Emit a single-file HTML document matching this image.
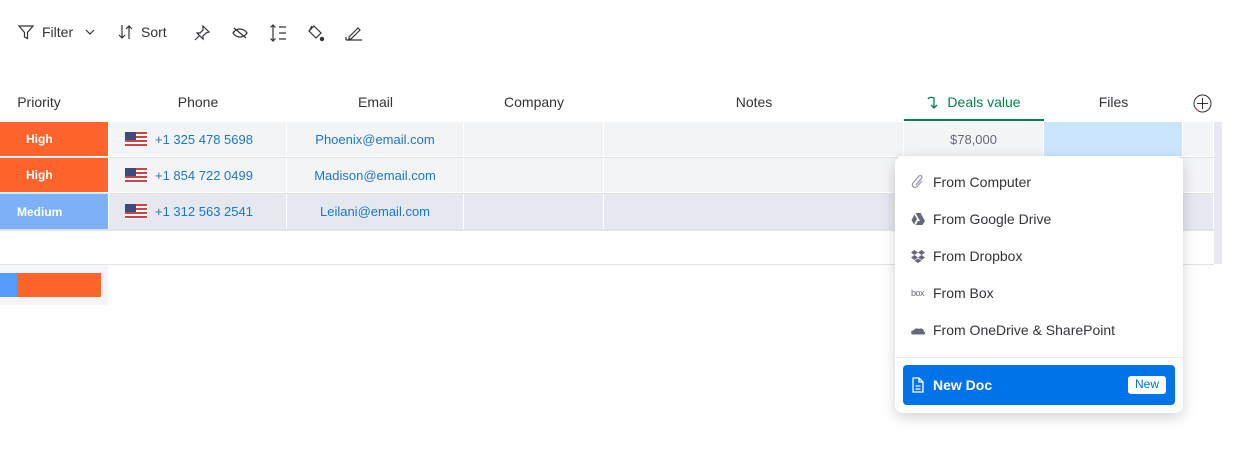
<!DOCTYPE html>
<html><head><meta charset="utf-8"><style>
*{box-sizing:border-box;margin:0;padding:0}
body{width:1237px;height:476px;background:#fff;font-family:"Liberation Sans",sans-serif;position:relative;overflow:hidden;color:#323338}
.a{position:absolute}
.tb{top:22px;font-size:14px;color:#323338;display:flex;align-items:center;height:20px}
.h{top:94px;font-size:14px;color:#323338;text-align:center;height:20px}
.c{position:absolute;height:34px;display:flex;align-items:center;justify-content:center;font-size:13px}
.ph{color:#1f76c2;justify-content:flex-start;padding-left:16px}
.flag{width:22px;height:15px;margin-right:8px;background:repeating-linear-gradient(#c44 0 2px,#fff 2px 4px);position:relative}
.flag:before{content:"";position:absolute;left:0;top:0;width:11px;height:8px;background:#3c4a7c}
.em{color:#1f76c2}
.mi{position:absolute;left:911px;font-size:14px;color:#323338;display:flex;align-items:center;height:20px}
.mi svg{margin-right:8px}
</style></head><body>
<div class="a tb" style="left:17px"><svg width="18" height="18" viewBox="0 0 18 18" fill="none" stroke="#323338" stroke-width="1.2"><path d="M2 3h14l-5.5 6.5v6l-3-1.5v-4.5z"/></svg><span style="margin-left:7px">Filter</span><svg style="margin-left:12px" width="10" height="8" viewBox="0 0 10 8" fill="none" stroke="#323338" stroke-width="1.2"><path d="M1 2l4 4 4-4"/></svg></div>
<div class="a tb" style="left:118px"><svg width="16" height="18" viewBox="0 0 16 18" fill="none" stroke="#323338" stroke-width="1.2"><path d="M4 2v13M1 12l3 3 3-3M11 16V3M8 6l3-3 3 3"/></svg><span style="margin-left:7px">Sort</span></div>
<svg class="a" style="left:193px;top:24px" width="18" height="18" viewBox="0 0 18 18" fill="none" stroke="#323338" stroke-width="1.2"><path d="M10 2l6 6-3 1-3 3 0 3-6-6 3 0 3-3zM6 12l-4 4"/></svg>
<svg class="a" style="left:231px;top:24px" width="18" height="18" viewBox="0 0 18 18" fill="none" stroke="#323338" stroke-width="1.2"><path d="M2 9c2-3 4-4 7-4s5 1 7 4c-2 3-4 4-7 4s-5-1-7-4zM3 4l12 10"/></svg>
<svg class="a" style="left:269px;top:23px" width="20" height="20" viewBox="0 0 20 20" fill="none" stroke="#323338" stroke-width="1.2"><path d="M4 2v16M1.5 4.5L4 2l2.5 2.5M1.5 15.5L4 18l2.5-2.5M10 4h7M10 10h7M10 16h7"/></svg>
<svg class="a" style="left:306px;top:23px" width="20" height="20" viewBox="0 0 20 20" fill="none" stroke="#323338" stroke-width="1.2"><path d="M3 8l5-5 7 7-5 5zM3 8l3-5"/><circle cx="16" cy="16" r="1.6" fill="#323338"/></svg>
<svg class="a" style="left:344px;top:23px" width="20" height="20" viewBox="0 0 20 20" fill="none" stroke="#323338" stroke-width="1.2"><path d="M2 17h16M5 14l9-9 2 2-9 9H5zM2 17v-3"/></svg>

<div class="a h" style="left:0;width:78px">Priority</div>
<div class="a h" style="left:109px;width:178px">Phone</div>
<div class="a h" style="left:287px;width:177px">Email</div>
<div class="a h" style="left:464px;width:140px">Company</div>
<div class="a h" style="left:604px;width:300px">Notes</div>
<div class="a h" style="left:904px;width:140px;color:#037f4c"><svg width="14" height="14" viewBox="0 0 14 14" fill="none" stroke="#037f4c" stroke-width="1.3" style="vertical-align:-2px;margin-right:6px"><path d="M1 4c1-2 4-2 6-1v10M4 10l3 3 3-3"/></svg>Deals value</div>
<div class="a" style="left:904px;top:119px;width:140px;height:2px;background:#037f4c"></div>
<div class="a h" style="left:1044px;width:139px">Files</div>
<svg class="a" style="left:1193px;top:94px" width="19" height="19" viewBox="0 0 19 19" fill="none"><circle cx="9.5" cy="9.5" r="8.5" stroke="#323338"/><path d="M9.5 4v11M4 9.5h11" stroke="#323338"/><path d="M2 13a8.5 8.5 0 0 0 4 4" stroke="#d83a52"/></svg>

<div class="a" style="left:0;top:122px;width:1214px;height:107px;background:#fff"></div>
<div class="c" style="left:0;top:122px;width:108px;background:#ff642e;color:#fff;font-weight:bold;justify-content:flex-start;padding-left:26px;font-size:12px">High</div>
<div class="c" style="left:0;top:158px;width:108px;background:#ff642e;color:#fff;font-weight:bold;justify-content:flex-start;padding-left:26px;font-size:12px">High</div>
<div class="c" style="left:0;top:194px;width:108px;height:35px;background:#7eb0f7;color:#fff;font-weight:bold;justify-content:flex-start;padding-left:17px;font-size:12px">Medium</div>

<div class="c ph" style="left:109px;top:122px;width:177px;background:#f3f4f6"><span class="flag"></span>+1 325 478 5698</div>
<div class="c ph" style="left:109px;top:158px;width:177px;background:#f3f4f6"><span class="flag"></span>+1 854 722 0499</div>
<div class="c ph" style="left:109px;top:194px;width:177px;height:35px;background:#e5e8ef"><span class="flag"></span>+1 312 563 2541</div>

<div class="c em" style="left:287px;top:122px;width:176px;background:#f3f4f6">Phoenix@email.com</div>
<div class="c em" style="left:287px;top:158px;width:176px;background:#f3f4f6">Madison@email.com</div>
<div class="c em" style="left:287px;top:194px;width:176px;height:35px;background:#e5e8ef">Leilani@email.com</div>

<div class="c" style="left:464px;top:122px;width:139px;background:#f3f4f6"></div>
<div class="c" style="left:464px;top:158px;width:139px;background:#f3f4f6"></div>
<div class="c" style="left:464px;top:194px;width:139px;height:35px;background:#e5e8ef"></div>
<div class="c" style="left:604px;top:122px;width:299px;background:#f3f4f6"></div>
<div class="c" style="left:604px;top:158px;width:299px;background:#f3f4f6"></div>
<div class="c" style="left:604px;top:194px;width:299px;height:35px;background:#e5e8ef"></div>
<div class="c" style="left:904px;top:122px;width:139px;background:#f3f4f6;color:#676879">$78,000</div>
<div class="c" style="left:904px;top:158px;width:139px;background:#f3f4f6"></div>
<div class="c" style="left:904px;top:194px;width:139px;height:35px;background:#e5e8ef"></div>
<div class="c" style="left:1044px;top:122px;width:138px;background:#cce5ff"></div>
<div class="c" style="left:1183px;top:122px;width:30px;background:#f3f4f6"></div>
<div class="c" style="left:1183px;top:158px;width:30px;background:#f3f4f6"></div>
<div class="c" style="left:1183px;top:194px;width:30px;height:35px;background:#e5e8ef"></div>
<div class="a" style="left:1214px;top:122px;width:8px;height:142px;background:#e6e9ef"></div>
<div class="a" style="left:0;top:157px;width:1214px;height:1px;background:#e1e3e8"></div>
<div class="a" style="left:0;top:193px;width:1214px;height:1px;background:#e1e3e8"></div>
<div class="a" style="left:0;top:229px;width:1214px;height:2px;background:#e1e3e8"></div>
<div class="a" style="left:0;top:264px;width:1214px;height:1px;background:#e1e3e8"></div>
<div class="a" style="left:0;top:265px;width:108px;height:40px;background:#f5f6f8"></div>
<div class="a" style="left:0;top:273px;width:17px;height:24px;background:#579bfc"></div>
<div class="a" style="left:17px;top:273px;width:84px;height:24px;background:#ff642e"></div>

<div class="a" style="left:895px;top:156px;width:288px;height:257px;background:#fff;border-radius:8px;box-shadow:0 4px 14px rgba(0,0,0,.18)"></div>
<div class="mi" style="top:172px"><svg width="14" height="16" viewBox="0 0 14 16" fill="none" stroke="#9699a6" stroke-width="1.3"><path d="M11 7l-5 5.5a2.5 2.5 0 0 1-4-3.5l6-7a1.7 1.7 0 0 1 2.5 2.3l-5.5 6.5"/></svg>From Computer</div>
<div class="mi" style="top:209px"><svg width="14" height="14" viewBox="0 0 14 14" fill="#676879"><path d="M4.5 1h5l4.5 8h-5zM3.5 2.5L6 7 3 12.5 0.5 8zM4.5 13l2.5-4h7l-2.5 4z"/></svg>From Google Drive</div>
<div class="mi" style="top:246px"><svg width="14" height="14" viewBox="0 0 14 14" fill="#676879"><path d="M3.5 1L0 3.5 3.5 6 7 3.5zM10.5 1L7 3.5 10.5 6 14 3.5zM3.5 6L0 8.5 3.5 11 7 8.5zM10.5 6L7 8.5 10.5 11 14 8.5zM3.5 11.8L7 14l3.5-2.2L7 9.5z"/></svg>From Dropbox</div>
<div class="mi" style="top:283px"><span style="font-size:9px;color:#676879;width:22px;display:inline-block;letter-spacing:-.5px">box</span>From Box</div>
<div class="mi" style="top:320px"><svg width="14" height="10" viewBox="0 0 14 10" fill="#676879"><path d="M2 9.5h10.5a1.5 1.5 0 0 0 .3-3A3 3 0 0 0 8 4 4 4 0 0 0 2.3 5.5 2 2 0 0 0 2 9.5z"/></svg>From OneDrive &amp; SharePoint</div>
<div class="a" style="left:895px;top:357px;width:288px;height:1px;background:#e6e9ef"></div>
<div class="a" style="left:903px;top:365px;width:272px;height:40px;background:#0073ea;border-radius:4px;color:#fff;font-weight:bold;font-size:14px;display:flex;align-items:center;padding-left:8px">
<svg width="14" height="16" viewBox="0 0 14 16" fill="none" stroke="#fff" stroke-width="1.3" style="margin-right:8px"><path d="M2 1h6l4 4v10H2zM8 1v4h4M4.5 9h5M4.5 12h5"/></svg>New Doc
<span style="position:absolute;right:9px;top:11px;background:#fff;color:#0073ea;font-weight:normal;font-size:12px;padding:1px 7px;border-radius:3px;height:18px">New</span></div>
</body></html>
